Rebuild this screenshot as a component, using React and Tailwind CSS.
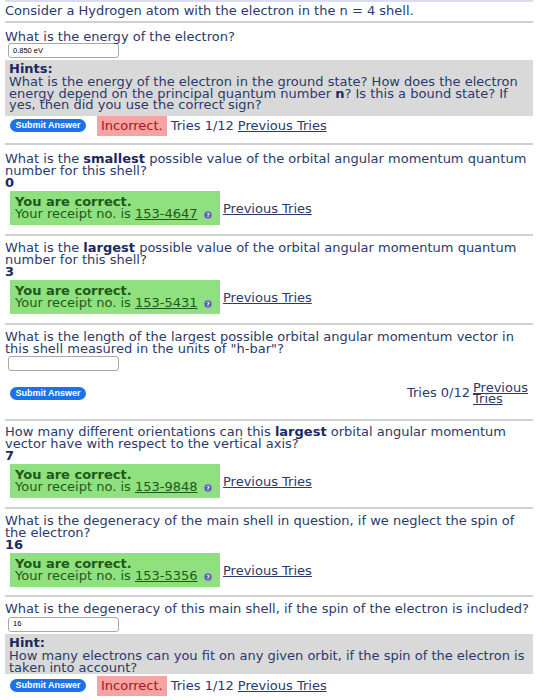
import React from 'react';

const font = { fontFamily: '"DejaVu Sans", Verdana, sans-serif' };
const arial = { fontFamily: '"Liberation Sans", Arial, sans-serif' };

const SubmitButton = () => (
  <button style={arial} className="h-[13px] w-[76px] rounded-full bg-[#1a73e8] text-[9px] font-bold leading-[13px] text-white">
    Submit Answer
  </button>
);

const Incorrect = ({ tries }) => (
  <div className="flex items-center">
    <span className="h-[20px] bg-[#f5a3a3] px-[4px] text-[13px] leading-[20px] text-[#9c1a1a]">Incorrect.</span>
    <span className="ml-[4px] text-[13px] leading-[20px] text-[#2b3a6b]">Tries {tries}</span>
    <a className="ml-[4px] text-[13px] leading-[20px] text-[#2b3a6b] underline">Previous Tries</a>
  </div>
);

const HelpDot = () => (
  <svg width="10" height="10" viewBox="0 0 10 10" className="ml-[5px] mt-[2px] inline-block">
    <circle cx="5" cy="5" r="4.6" fill="#9aa6c4" />
    <circle cx="5" cy="5" r="3.3" fill="#4d62a0" />
    <text x="5" y="7.2" textAnchor="middle" fontSize="5.5" fontWeight="bold" fill="#fff" fontFamily="DejaVu Sans, sans-serif">?</text>
  </svg>
);

const Correct = ({ receipt }) => (
  <div className="ml-[5px] mt-[2px] flex items-center">
    <div className="w-[210px] bg-[#8fe07f] px-[5px] pt-[5px] pb-[5px] text-[13px] leading-[12px] text-[#1d5a17]">
      <div className="font-bold">You are correct.</div>
      <div className="flex items-center">
        Your receipt no. is&nbsp;<a className="underline">{receipt}</a>
        <HelpDot />
      </div>
    </div>
    <a className="ml-[3px] pt-[2px] text-[13px] leading-[13px] text-[#2b3a6b] underline">Previous Tries</a>
  </div>
);

const Input = ({ value, className = '' }) => (
  <div style={arial} className={`ml-[3px] flex h-[15px] w-[111px] items-center rounded-[3px] border border-[#a9a9a9] bg-white px-[4px] text-[7.5px] text-black ${className}`}>
    {value}
  </div>
);

const Section = ({ children, className = '' }) => (
  <div className={`border-b-2 border-[#d0d0d0] ${className}`}>{children}</div>
);

const Q = ({ children }) => (
  <div className="text-[13px] leading-[12px] text-[#2b3a6b]">{children}</div>
);

const Ans = ({ children }) => (
  <div className="text-[13px] font-bold leading-[12px] text-[#1a2a5e]">{children}</div>
);

export default function App() {
  return (
    <div style={font} className="w-[538px] bg-white px-[5px] text-[#2b3a6b]">
      <div className="border-t-2 border-[#dcdcf0] pt-[2px]" />
      <Section className="pb-[3px]">
        <div className="text-[13px] leading-[14px]">Consider a Hydrogen atom with the electron in the n = 4 shell.</div>
      </Section>

      <Section className="pb-[7px] pt-[8px]">
        <Q>What is the energy of the electron?</Q>
        <Input value="0.850 eV" />
        <div className="mt-[2px] bg-[#d9d9d9] px-[4px] pb-[5px] pt-[2px] text-[13px]">
          <div className="font-bold leading-[14px] text-[#1a2a5e]">Hints:</div>
          <div className="leading-[11.5px]">
            What is the energy of the electron in the ground state? How does the electron energy depend on the principal quantum number <b className="text-[#1a2a5e]">n</b>? Is this a bound state? If yes, then did you use the correct sign?
          </div>
        </div>
        <div className="ml-[5px] flex items-center gap-[11px]">
          <SubmitButton />
          <Incorrect tries="1/12" />
        </div>
      </Section>

      <Section className="pb-[9px] pt-[8px]">
        <Q>
          What is the <b className="text-[#1a2a5e]">smallest</b> possible value of the orbital angular momentum quantum number for this shell?
        </Q>
        <Ans>0</Ans>
        <Correct receipt="153-4647" />
      </Section>

      <Section className="pb-[9px] pt-[6px]">
        <Q>
          What is the <b className="text-[#1a2a5e]">largest</b> possible value of the orbital angular momentum quantum number for this shell?
        </Q>
        <Ans>3</Ans>
        <Correct receipt="153-5431" />
      </Section>

      <Section className="pb-[14px] pt-[6px]">
        <Q>
          What is the length of the largest possible orbital angular momentum vector in this shell measured in the units of "h-bar"?
        </Q>
        <Input value="" className="mt-[1px]" />
        <div className="mt-[8px] flex items-start justify-between">
          <div className="ml-[5px]">
            <SubmitButton />
          </div>
          <div className="mr-[6px] mt-[3px] flex items-center">
            <span className="text-[13px] leading-[14px]">Tries 0/12</span>
            <a className="ml-[3px] w-[54px] text-[13px] leading-[11.5px] underline">Previous Tries</a>
          </div>
        </div>
      </Section>

      <Section className="pb-[9px] pt-[5px]">
        <Q>
          How many different orientations can this <b className="text-[#1a2a5e]">largest</b> orbital angular momentum vector have with respect to the vertical axis?
        </Q>
        <Ans>7</Ans>
        <Correct receipt="153-9848" />
      </Section>

      <Section className="pb-[8px] pt-[6px]">
        <Q>
          What is the degeneracy of the main shell in question, if we neglect the spin of the electron?
        </Q>
        <Ans>16</Ans>
        <Correct receipt="153-5356" />
      </Section>

      <div className="pb-[6px] pt-[6px]">
        <Q>What is the degeneracy of this main shell, if the spin of the electron is included?</Q>
        <Input value="16" className="mt-[2px]" />
        <div className="mt-[2px] bg-[#d9d9d9] px-[4px] pt-[2px] text-[13px]">
          <div className="font-bold leading-[14px] text-[#1a2a5e]">Hint:</div>
          <div className="leading-[12px]">How many electrons can you fit on any given orbit, if the spin of the electron is taken into account?</div>
        </div>
        <div className="ml-[5px] mt-[2px] flex items-center gap-[11px]">
          <SubmitButton />
          <Incorrect tries="1/12" />
        </div>
      </div>
    </div>
  );
}
